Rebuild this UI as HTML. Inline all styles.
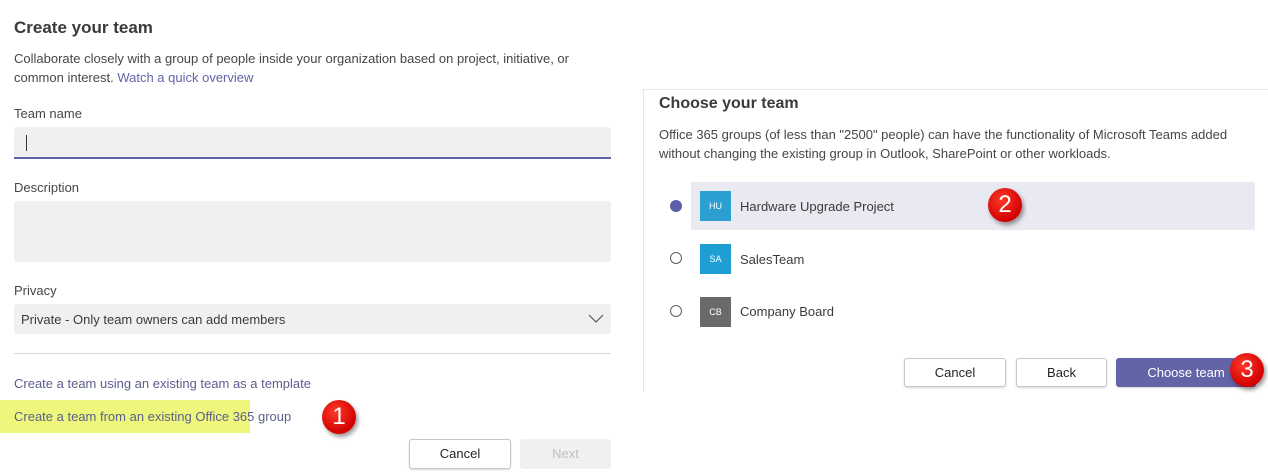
<!DOCTYPE html>
<html><head><style>
*{margin:0;padding:0;box-sizing:border-box}
body{width:1268px;height:476px;background:#fff;font-family:"Liberation Sans",sans-serif;color:#252423;position:relative;overflow:hidden}
.a{position:absolute}
.t{font-size:13px;color:#484644}
.box{background:#f0f0f0;border-radius:3px}
.btn{position:absolute;border:1px solid #c8c6c4;border-radius:3px;background:#fff;font-size:13px;text-align:center;line-height:28px;color:#252423;box-shadow:0 1px 2px rgba(0,0,0,.15)}
.num{position:absolute;width:34px;height:34px;border-radius:50%;background:radial-gradient(circle at 40% 35%,#ff3a2a,#d10000 70%);color:#fff;font-size:24px;text-align:center;line-height:34px;box-shadow:2px 3px 4px rgba(0,0,0,.4)}
.av{position:absolute;width:31px;height:30px;color:#fff;font-size:9px;text-align:center;line-height:30px}
.rad{position:absolute;width:12px;height:12px;border-radius:50%;border:1px solid #605e5c}
</style></head><body>
<div class="a" style="left:14px;top:18px;font-size:17px;font-weight:bold;color:#3b3a39">Create your team</div>
<div class="a t" style="left:14px;top:49px;line-height:19px;width:600px">Collaborate closely with a group of people inside your organization based on project, initiative, or common interest. <span style="color:#6264a7">Watch a quick overview</span></div>
<div class="a t" style="left:14px;top:106px">Team name</div>
<div class="a box" style="left:14px;top:127px;width:597px;height:32px;border-bottom:2px solid #6264a7;border-radius:3px 3px 0 0"></div>
<div class="a" style="left:26px;top:135px;width:1px;height:16px;background:#333"></div>
<div class="a t" style="left:14px;top:180px">Description</div>
<div class="a box" style="left:14px;top:201px;width:597px;height:61px"></div>
<div class="a t" style="left:14px;top:283px">Privacy</div>
<div class="a box" style="left:14px;top:304px;width:597px;height:30px"></div>
<div class="a t" style="left:21px;top:312px;color:#3b3a39">Private - Only team owners can add members</div>
<svg class="a" style="left:588px;top:314px" width="16" height="10"><path d="M1 1 L8 8 L15 1" fill="none" stroke="#555" stroke-width="1.2"/></svg>
<div class="a" style="left:14px;top:353px;width:597px;height:1px;background:#d8d8d8"></div>
<div class="a t" style="left:14px;top:376px;color:#5b5f8a">Create a team using an existing team as a template</div>
<div class="a" style="left:0;top:400px;width:250px;height:33px;background:#eef77c"></div>
<div class="a t" style="left:14px;top:409px;color:#5b5f8a">Create a team from an existing Office 365 group</div>
<div class="num" style="left:322px;top:400px">1</div>
<div class="btn" style="left:409px;top:439px;width:102px;height:30px">Cancel</div>
<div class="btn" style="left:520px;top:439px;width:91px;height:30px;background:#f0f0f0;border-color:#f0f0f0;color:#c0c0c0;box-shadow:none">Next</div>

<div class="a" style="left:643px;top:89px;width:625px;height:303px;border-top:1px solid #e6e6e6;border-left:1px solid #e6e6e6"></div>
<div class="a" style="left:659px;top:95px;font-size:16px;font-weight:bold;color:#3b3a39">Choose your team</div>
<div class="a t" style="left:659px;top:125px;line-height:19px;width:600px">Office 365 groups (of less than "2500" people) can have the functionality of Microsoft Teams added without changing the existing group in Outlook, SharePoint or other workloads.</div>
<div class="a" style="left:691px;top:182px;width:564px;height:48px;background:#e9e9f1"></div>
<div class="a" style="left:670px;top:200px;width:12px;height:12px;border-radius:50%;background:#5b5fa7"></div>
<div class="av" style="left:700px;top:191px;background:#2a9fd0">HU</div>
<div class="a t" style="left:740px;top:199px;color:#3b3a39">Hardware Upgrade Project</div>
<div class="num" style="left:988px;top:188px">2</div>
<div class="rad" style="left:670px;top:252px"></div>
<div class="av" style="left:700px;top:244px;background:#1e9fd4">SA</div>
<div class="a t" style="left:740px;top:252px;color:#3b3a39">SalesTeam</div>
<div class="rad" style="left:670px;top:305px"></div>
<div class="av" style="left:700px;top:297px;background:#6a6a6a">CB</div>
<div class="a t" style="left:740px;top:304px;color:#3b3a39">Company Board</div>
<div class="btn" style="left:904px;top:358px;width:102px;height:29px">Cancel</div>
<div class="btn" style="left:1016px;top:358px;width:91px;height:29px">Back</div>
<div class="btn" style="left:1116px;top:358px;width:140px;height:29px;background:#6264a7;border-color:#6264a7;color:#fff">Choose team</div>
<div class="num" style="left:1230px;top:353px">3</div>
</body></html>
